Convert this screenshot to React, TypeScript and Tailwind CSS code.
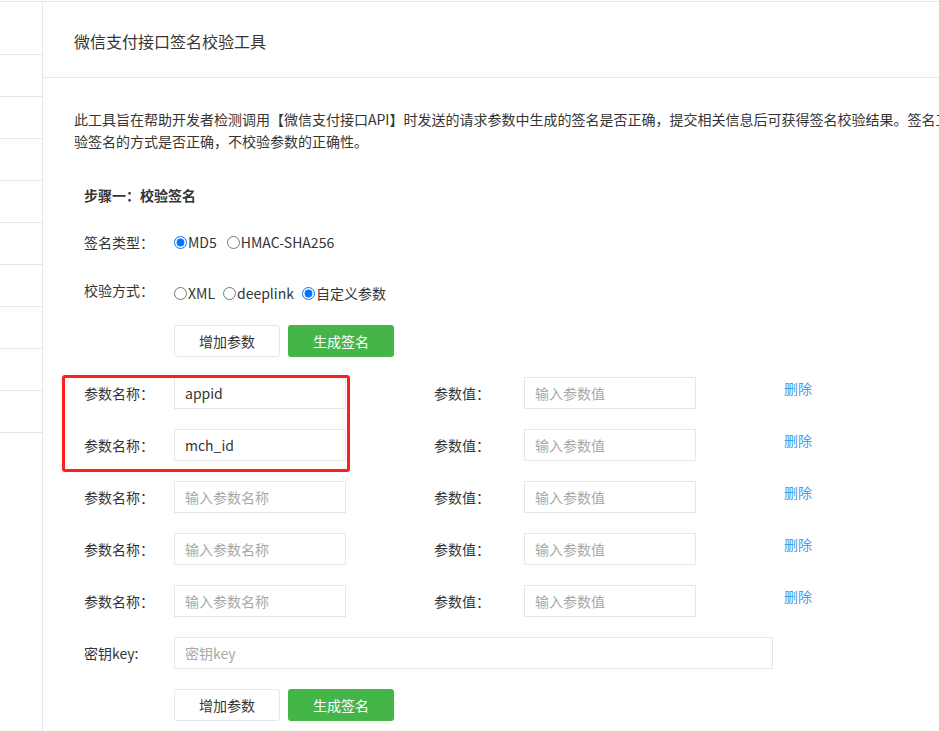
import React from 'react';

const font = "font-['Noto_Sans_CJK_SC','Noto_Sans',sans-serif]";

function Radio({ label, checked, name }: { label: string; checked?: boolean; name: string }) {
  return (
    <label className="flex items-center">
      <input type="radio" name={name} defaultChecked={checked} className="m-0 h-[13px] w-[13px]" />
      <span className="ml-px">{label}</span>
    </label>
  );
}

function Btns() {
  return (
    <div className="flex gap-2 pl-[90px]">
      <button className="h-8 w-[106px] rounded-[3px] border border-[#e4e8eb] bg-white text-sm text-[#353535]">
        增加参数
      </button>
      <button className="h-8 w-[106px] rounded-[3px] bg-[#44b549] text-sm text-white">生成签名</button>
    </div>
  );
}

const params = [
  { name: 'appid', value: '' },
  { name: 'mch_id', value: '' },
  { name: '', value: '' },
  { name: '', value: '' },
  { name: '', value: '' },
];

const inputCls =
  'h-8 rounded-none border border-[#e7e7eb] px-[10px] text-sm text-[#353535] outline-none placeholder:text-[#a8a8a8]';

export default function App() {
  return (
    <div className={`relative h-[731px] w-[939px] overflow-hidden bg-white text-[#353535] ${font}`}>
      <div className="mt-px flex h-[730px] border-t border-[#e7e7eb]">
        {/* side menu */}
        <div className="w-[43px] shrink-0 border-r border-[#e7e7eb]">
          <div className="h-[53px] border-b border-[#e7e7eb]" />
          {Array.from({ length: 9 }).map((_, i) => (
            <div key={i} className="h-[42px] border-b border-[#e7e7eb]" />
          ))}
        </div>

        <div className="min-w-0 flex-1">
          <div className="h-[76px] border-b border-[#e7e7eb] pl-[31px] pt-[27px]">
            <h1 className="text-base leading-6 font-normal whitespace-nowrap">微信支付接口签名校验工具</h1>
          </div>

          <div className="pl-[31px] pt-[30px]">
            <p className="text-sm leading-[22px] whitespace-nowrap">
              此工具旨在帮助开发者检测调用【微信支付接口API】时发送的请求参数中生成的签名是否正确，提交相关信息后可获得签名校验结果。签名工具只校
              <br />
              验签名的方式是否正确，不校验参数的正确性。
            </p>

            <div className="ml-[10px] text-sm">
              <div className="mt-[32px] font-bold leading-[22px]">步骤一：校验签名</div>

              <div className="mt-[25px] flex leading-[22px]">
                <span className="w-[90px]">签名类型：</span>
                <div className="flex gap-[10px]">
                  <Radio name="type" label="MD5" checked />
                  <Radio name="type" label="HMAC-SHA256" />
                </div>
              </div>

              <div className="mt-[26px] flex leading-[22px]">
                <span className="w-[90px]">校验方式：</span>
                <div className="flex gap-[8px] pt-[3px]">
                  <Radio name="mode" label="XML" />
                  <Radio name="mode" label="deeplink" />
                  <Radio name="mode" label="自定义参数" checked />
                </div>
              </div>

              <div className="mt-[21px]">
                <Btns />
              </div>

              <div className="mt-5 flex flex-col gap-5">
                {params.map((p, i) => (
                  <div key={i} className="flex items-start">
                    <span className="w-[90px] leading-8">参数名称：</span>
                    <input className={`${inputCls} w-[172px]`} defaultValue={p.name} placeholder="输入参数名称" />
                    <span className="ml-[88px] w-[90px] leading-8">参数值：</span>
                    <input className={`${inputCls} w-[172px]`} defaultValue={p.value} placeholder="输入参数值" />
                    <a className="ml-[88px] cursor-pointer leading-[22px] text-[#459ae9]">删除</a>
                  </div>
                ))}

                <div className="flex items-start">
                  <span className="w-[90px] leading-8">密钥key:</span>
                  <input className={`${inputCls} w-[599px]`} placeholder="密钥key" />
                </div>

                <Btns />
              </div>
            </div>
          </div>
        </div>
      </div>

      {/* annotation box */}
      <div className="pointer-events-none absolute left-[62px] top-[375px] h-[97px] w-[288px] rounded-[3px] border-[3px] border-[#ff1e1e]" />
    </div>
  );
}
